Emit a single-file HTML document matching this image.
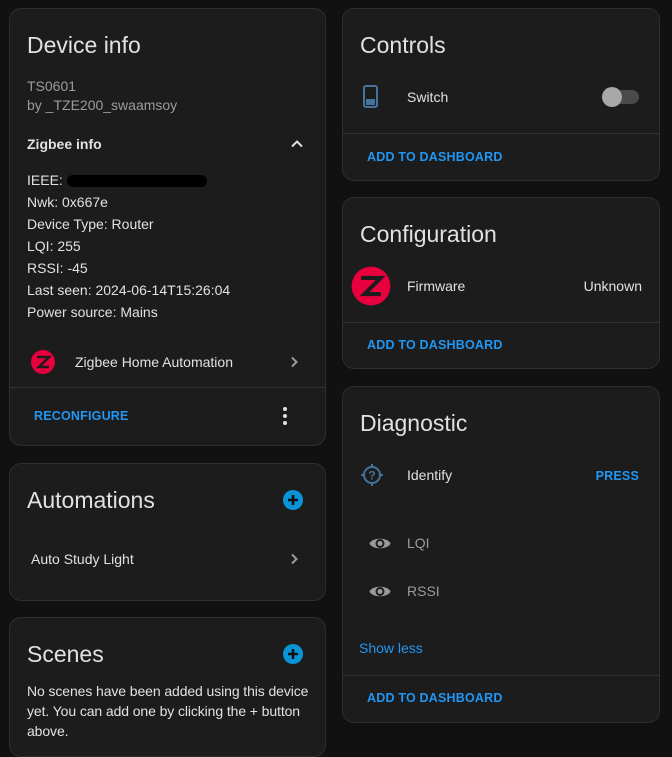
<!DOCTYPE html>
<html><head><style>
*{margin:0;padding:0;box-sizing:border-box}
body{width:672px;height:727px;background:#111111;font-family:"Liberation Sans",sans-serif;color:#e1e1e1;position:relative;overflow:hidden}
.card{position:absolute;background:#1c1c1c;border:1px solid #2e2e2e;border-radius:12px}
.t{position:absolute;white-space:nowrap;line-height:20px}
.h{font-size:23px;line-height:30px;color:#e1e1e1}
.s{font-size:14px}
.g{color:#9b9b9b}
.b{color:#2196f3;font-weight:bold;font-size:12.5px;letter-spacing:0.2px}
.div{position:absolute;left:0;right:0;height:1px;background:#333}
</style></head><body>

<div class="card" style="left:9px;top:8px;width:317px;height:438px">
 <div class="t h" style="left:17px;top:21px">Device info</div>
 <div class="t s g" style="left:17px;top:67px">TS0601</div>
 <div class="t s g" style="left:17px;top:86px">by _TZE200_swaamsoy</div>
 <div class="t s" style="left:17px;top:125px;font-weight:bold">Zigbee info</div>
 <svg style="position:absolute;left:279px;top:127px" width="16" height="16" viewBox="0 0 16 16"><path d="M3 10.5L8 5.5L13 10.5" stroke="#e1e1e1" stroke-width="2" fill="none"/></svg>
 <div class="t s" style="left:17px;top:161px">IEEE: <span style="display:inline-block;width:140px;height:12px;background:#000;border-radius:6px;vertical-align:middle"></span></div>
 <div class="t s" style="left:17px;top:183px">Nwk: 0x667e</div>
 <div class="t s" style="left:17px;top:205px">Device Type: Router</div>
 <div class="t s" style="left:17px;top:227px">LQI: 255</div>
 <div class="t s" style="left:17px;top:249px">RSSI: -45</div>
 <div class="t s" style="left:17px;top:271px">Last seen: 2024-06-14T15:26:04</div>
 <div class="t s" style="left:17px;top:293px">Power source: Mains</div>
 <svg style="position:absolute;left:20px;top:340px" width="26" height="26" viewBox="0 0 26 26"><circle cx="13" cy="13" r="12" fill="#e8003e"/><path d="M7 8h12l-10 10h10" stroke="#1c1c1c" stroke-width="2.5" fill="none"/></svg>
 <div class="t s" style="left:65px;top:343px">Zigbee Home Automation</div>
 <svg style="position:absolute;left:277px;top:346px" width="14" height="14" viewBox="0 0 14 14"><path d="M5 2.5L9.5 7L5 11.5" stroke="#9b9b9b" stroke-width="2" fill="none"/></svg>
 <div class="div" style="top:378px"></div>
 <div class="t b" style="left:24px;top:397px">RECONFIGURE</div>
 <svg style="position:absolute;left:271px;top:397px" width="8" height="20"><circle cx="4" cy="3" r="2" fill="#e1e1e1"/><circle cx="4" cy="10" r="2" fill="#e1e1e1"/><circle cx="4" cy="17" r="2" fill="#e1e1e1"/></svg>
</div>

<div class="card" style="left:9px;top:463px;width:317px;height:138px">
 <div class="t h" style="left:17px;top:21px">Automations</div>
 <svg style="position:absolute;left:273px;top:26px" width="20" height="20"><circle cx="10" cy="10" r="10" fill="#0a94d8"/><path d="M10 5v10M5 10h10" stroke="#111" stroke-width="2.6"/></svg>
 <div class="t s" style="left:21px;top:85px">Auto Study Light</div>
 <svg style="position:absolute;left:277px;top:88px" width="14" height="14" viewBox="0 0 14 14"><path d="M5 2.5L9.5 7L5 11.5" stroke="#9b9b9b" stroke-width="2" fill="none"/></svg>
</div>

<div class="card" style="left:9px;top:617px;width:317px;height:140px">
 <div class="t h" style="left:17px;top:21px">Scenes</div>
 <svg style="position:absolute;left:273px;top:26px" width="20" height="20"><circle cx="10" cy="10" r="10" fill="#0a94d8"/><path d="M10 5v10M5 10h10" stroke="#111" stroke-width="2.6"/></svg>
 <div class="t s" style="left:17px;top:63px;line-height:20px;letter-spacing:-0.1px">No scenes have been added using this device<br>yet. You can add one by clicking the + button<br>above.</div>
</div>

<div class="card" style="left:342px;top:8px;width:318px;height:173px">
 <div class="t h" style="left:17px;top:21px">Controls</div>
 <svg style="position:absolute;left:20px;top:76px" width="15" height="23" viewBox="0 0 15 23"><rect x="1" y="1" width="13" height="21" rx="2" fill="none" stroke="#44739e" stroke-width="2"/><rect x="3" y="14" width="9" height="6" fill="#44739e"/></svg>
 <div class="t s" style="left:64px;top:78px">Switch</div>
 <div style="position:absolute;left:266px;top:81px;width:30px;height:14px;border-radius:7px;background:#4a4a4a"></div>
 <div style="position:absolute;left:259px;top:78px;width:20px;height:20px;border-radius:10px;background:#a8a8a8"></div>
 <div class="div" style="top:124px"></div>
 <div class="t b" style="left:24px;top:138px">ADD TO DASHBOARD</div>
</div>

<div class="card" style="left:342px;top:197px;width:318px;height:172px">
 <div class="t h" style="left:17px;top:21px">Configuration</div>
 <svg style="position:absolute;left:7px;top:67px" width="42" height="42" viewBox="0 0 26 26"><circle cx="13" cy="13" r="12" fill="#e8003e"/><path d="M7 8h12l-10 10h10" stroke="#1c1c1c" stroke-width="2.5" fill="none"/></svg>
 <div class="t s" style="left:64px;top:78px">Firmware</div>
 <div class="t s" style="right:17px;top:78px">Unknown</div>
 <div class="div" style="top:124px"></div>
 <div class="t b" style="left:24px;top:137px">ADD TO DASHBOARD</div>
</div>

<div class="card" style="left:342px;top:386px;width:318px;height:337px">
 <div class="t h" style="left:17px;top:21px">Diagnostic</div>
 <svg style="position:absolute;left:17px;top:76px" width="24" height="24" viewBox="0 0 24 24"><circle cx="12" cy="12" r="8" fill="none" stroke="#44739e" stroke-width="2"/><path d="M12 1v4M12 19v4M1 12h4M19 12h4" stroke="#44739e" stroke-width="2"/><text x="12" y="16.5" font-size="12" font-family="Liberation Sans" fill="#44739e" text-anchor="middle" font-weight="bold">?</text></svg>
 <div class="t s" style="left:64px;top:78px">Identify</div>
 <div class="t b" style="right:20px;top:79px">PRESS</div>
 <svg style="position:absolute;left:25px;top:148px" width="24" height="17" viewBox="0 0 22 16"><path d="M1 8C4 2 18 2 21 8C18 14 4 14 1 8Z" fill="#9b9b9b"/><circle cx="11" cy="8" r="4.2" fill="#1c1c1c"/><circle cx="11" cy="8" r="2.4" fill="#9b9b9b"/></svg>
 <div class="t s g" style="left:64px;top:146px">LQI</div>
 <svg style="position:absolute;left:25px;top:196px" width="24" height="17" viewBox="0 0 22 16"><path d="M1 8C4 2 18 2 21 8C18 14 4 14 1 8Z" fill="#9b9b9b"/><circle cx="11" cy="8" r="4.2" fill="#1c1c1c"/><circle cx="11" cy="8" r="2.4" fill="#9b9b9b"/></svg>
 <div class="t s g" style="left:64px;top:194px">RSSI</div>
 <div class="t s" style="left:16px;top:251px;color:#2196f3">Show less</div>
 <div class="div" style="top:288px"></div>
 <div class="t b" style="left:24px;top:301px">ADD TO DASHBOARD</div>
</div>

</body></html>
